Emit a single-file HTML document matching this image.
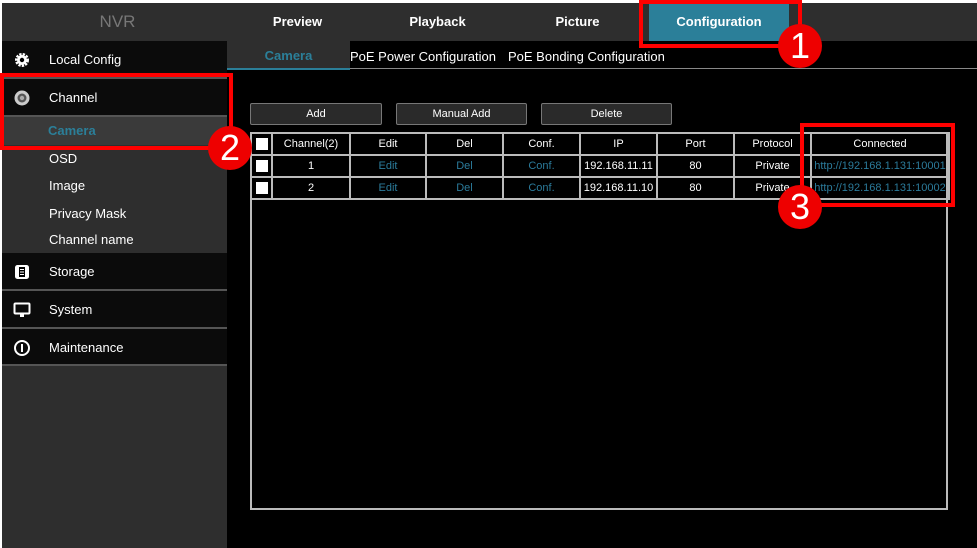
<!DOCTYPE html>
<html><head><meta charset="utf-8"><style>
*{margin:0;padding:0;box-sizing:border-box}
body{width:977px;height:548px;background:#fff;position:relative;overflow:hidden;font-family:"Liberation Sans",Arial,sans-serif;color:#fff}
.a{position:absolute}
.top{left:2px;top:3px;width:975px;height:38px;background:#2e2e2e}
.nav{top:3px;height:38px;line-height:38px;font-weight:bold;font-size:13px;text-align:center}
.side{left:2px;top:41px;width:225px;height:507px;background:#2e2e2e}
.main{left:227px;top:41px;width:750px;height:507px;background:#000}
.item{left:2px;width:225px;height:37px;background:#0b0b0b;font-size:13px;line-height:37px;padding-left:47px;border-bottom:2px solid #555}
.sub{left:49px;font-size:13px}
.ic{position:absolute;left:11px;top:10px}
.btn{top:103px;height:22px;border:1px solid #777;border-radius:2px;background:#2a2a2a;font-size:11px;text-align:center;line-height:20px}
table{position:absolute;left:250px;top:132px;width:698px;table-layout:fixed;border-collapse:collapse;font-size:11px}
td{border:2px solid #bbb;height:22px;text-align:center;padding:0;white-space:nowrap;overflow:hidden}
.cb{display:inline-block;width:12px;height:12px;background:#fff;vertical-align:middle}
.bl{color:#2b7b9b}
.red{position:absolute;border:4px solid #f00}
.circ{position:absolute;width:44px;height:44px;border-radius:50%;background:#e00;color:#fff;font-size:36px;line-height:44px;text-align:center;font-family:"Liberation Sans",sans-serif}
</style></head><body>
<div class="a top"></div>
<div class="a nav" style="left:70px;width:95px;font-weight:normal;font-size:17px;color:#777">NVR</div>
<div class="a nav" style="left:250px;width:95px">Preview</div>
<div class="a nav" style="left:390px;width:95px">Playback</div>
<div class="a nav" style="left:530px;width:95px">Picture</div>
<div class="a nav" style="left:649px;width:140px;background:#2b7f99">Configuration</div>
<div class="a side"></div>
<div class="a main"></div>
<div class="a" style="left:227px;top:41px;width:123px;height:29px;background:#2e2e2e;border-bottom:2px solid #2b7f99;color:#2b7f99;font-weight:bold;font-size:13px;text-align:center;line-height:30px">Camera</div>
<div class="a" style="left:350px;top:68px;width:627px;height:1px;background:#888"></div>
<div class="a" style="left:350px;top:49px;font-size:13px">PoE Power Configuration</div>
<div class="a" style="left:508px;top:49px;font-size:13px">PoE Bonding Configuration</div>

<div class="a item" style="top:41px;height:38px">Local Config<svg class="ic" width="18" height="18" viewBox="0 0 18 18"><circle cx="9" cy="9" r="5.5" fill="none" stroke="#fff" stroke-width="3" stroke-dasharray="2.2 1.1"/><circle cx="9" cy="9" r="5" fill="#fff"/><circle cx="9" cy="9" r="2.2" fill="#000"/></svg></div>
<div class="a item" style="top:79px;height:38px">Channel<svg class="ic" width="18" height="18" viewBox="0 0 18 18"><circle cx="9" cy="9" r="7.5" fill="#ccc"/><circle cx="9" cy="9" r="4.5" fill="#555"/><circle cx="9" cy="9" r="2.2" fill="#aaa"/></svg></div>
<div class="a" style="left:2px;top:117px;width:225px;height:28px;background:#3a3a3a"></div>
<div class="a sub" style="left:48px;top:123px;color:#2b7f99;font-weight:bold">Camera</div>
<div class="a sub" style="top:151px">OSD</div>
<div class="a sub" style="top:178px">Image</div>
<div class="a sub" style="top:206px">Privacy Mask</div>
<div class="a sub" style="top:232px">Channel name</div>
<div class="a item" style="top:253px;height:38px">Storage<svg class="ic" width="18" height="18" viewBox="0 0 18 18"><rect x="2" y="2" width="14" height="14" rx="2.5" fill="#fff"/><rect x="6" y="4" width="6" height="10" fill="#000"/><path d="M7 6.5h4M7 9h4M7 11.5h4" stroke="#fff"/></svg></div>
<div class="a item" style="top:291px;height:38px">System<svg class="ic" width="18" height="18" viewBox="0 0 18 18"><rect x="1.5" y="2.5" width="15" height="10" rx="1" fill="none" stroke="#fff" stroke-width="2"/><rect x="7" y="12" width="4" height="4" fill="#fff"/></svg></div>
<div class="a item" style="top:329px;height:37px">Maintenance<svg class="ic" width="18" height="18" viewBox="0 0 18 18"><circle cx="9" cy="9" r="7" fill="none" stroke="#fff" stroke-width="2"/><rect x="8" y="5" width="2" height="8" fill="#fff"/></svg></div>

<div class="a btn" style="left:250px;width:132px">Add</div>
<div class="a btn" style="left:396px;width:131px">Manual Add</div>
<div class="a btn" style="left:541px;width:131px">Delete</div>
<div class="a" style="left:250px;top:132px;width:698px;height:378px;border:2px solid #bbb"></div>
<table>
<colgroup><col style="width:21px"><col style="width:78px"><col style="width:76px"><col style="width:77px"><col style="width:77px"><col style="width:77px"><col style="width:77px"><col style="width:77px"><col style="width:138px"></colgroup>
<tr><td><span class="cb"></span></td><td>Channel(2)</td><td>Edit</td><td>Del</td><td>Conf.</td><td>IP</td><td>Port</td><td>Protocol</td><td>Connected</td></tr>
<tr><td><span class="cb"></span></td><td>1</td><td class="bl">Edit</td><td class="bl">Del</td><td class="bl">Conf.</td><td>192.168.11.11</td><td>80</td><td>Private</td><td class="bl">http://192.168.1.131:10001</td></tr>
<tr><td><span class="cb"></span></td><td>2</td><td class="bl">Edit</td><td class="bl">Del</td><td class="bl">Conf.</td><td>192.168.11.10</td><td>80</td><td>Private</td><td class="bl">http://192.168.1.131:10002</td></tr>
</table>

<div class="red" style="left:639px;top:0;width:163px;height:48px"></div>
<div class="circ" style="left:778px;top:24px">1</div>
<div class="red" style="left:0;top:73px;width:233px;height:77px"></div>
<div class="circ" style="left:208px;top:126px">2</div>
<div class="red" style="left:800px;top:123px;width:155px;height:84px"></div>
<div class="circ" style="left:778px;top:185px">3</div>
</body></html>
